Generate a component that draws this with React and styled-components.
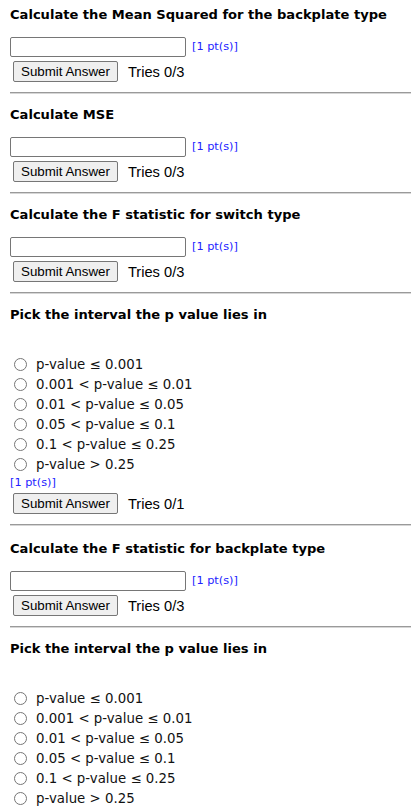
import styled, { createGlobalStyle } from "styled-components";

const GlobalStyle = createGlobalStyle`
  html, body {
    margin: 0;
    padding: 0;
    background: #fff;
  }
  body {
    font-family: "DejaVu Sans", Verdana, sans-serif;
    color: #000;
  }
`;

const Page = styled.div`
  padding: 7px 0 0 10px;
`;

const Problem = styled.section`
  display: flex;
  flex-direction: column;
  align-items: flex-start;
`;

const Title = styled.h3`
  margin: 0 0 ${(p) => (p.$choice ? "31px" : "14px")};
  font-size: 13.07px;
  line-height: 16px;
  font-weight: bold;
`;

const InputRow = styled.div`
  display: flex;
  align-items: center;
  gap: 6px;
`;

const AnswerInput = styled.input`
  box-sizing: border-box;
  width: 176px;
  height: 20px;
  margin: 0;
  border: 1px solid #767676;
  border-radius: 2px;
  padding: 1px 2px;
`;

const Points = styled.span`
  margin-top: ${(p) => (p.$choice ? "2px" : "0")};
  font-size: 11.3px;
  line-height: 14px;
  color: #2222ff;
`;

const SubmitRow = styled.div`
  display: flex;
  align-items: center;
  gap: 10px;
  margin: ${(p) => (p.$choice ? "3px" : "4px")} 0 0 3px;
`;

const SubmitButton = styled.button`
  box-sizing: border-box;
  height: 21px;
  padding: 0 7px;
  margin: 0;
  font-family: "Liberation Sans", Arial, sans-serif;
  font-size: 13.33px;
  color: #000;
  background: #efefef;
  border: 1px solid #767676;
  border-radius: 2px;
`;

const Tries = styled.span`
  font-family: "Liberation Sans", Arial, sans-serif;
  font-size: 14.67px;
`;

const Rule = styled.hr`
  align-self: stretch;
  margin: 10px 0 ${(p) => (p.$choice ? "15px" : "13px")};
  border: 0;
  border-top: 1px solid #9a9a9a;
  border-bottom: 1px solid #d6d6d6;
`;

const Options = styled.div`
  display: flex;
  flex-direction: column;
`;

const Option = styled.label`
  display: flex;
  align-items: center;
  gap: 9px;
  height: 20px;
  padding-left: 4px;
  font-size: 13.33px;
  color: #111;
`;

const Radio = styled.input`
  width: 13px;
  height: 13px;
  margin: 0;
`;

const intervals = [
  "p-value ≤ 0.001",
  "0.001 < p-value ≤ 0.01",
  "0.01 < p-value ≤ 0.05",
  "0.05 < p-value ≤ 0.1",
  "0.1 < p-value ≤ 0.25",
  "p-value > 0.25",
];

const problems = [
  { kind: "text", title: "Calculate the Mean Squared for the backplate type", tries: "0/3" },
  { kind: "text", title: "Calculate MSE", tries: "0/3" },
  { kind: "text", title: "Calculate the F statistic for switch type", tries: "0/3" },
  { kind: "choice", title: "Pick the interval the p value lies in", tries: "0/1" },
  { kind: "text", title: "Calculate the F statistic for backplate type", tries: "0/3" },
  { kind: "choice", title: "Pick the interval the p value lies in", tries: "0/1" },
];

const TextProblem = ({ title, tries }) => (
  <Problem>
    <Title>{title}</Title>
    <InputRow>
      <AnswerInput type="text" />
      <Points>[1 pt(s)]</Points>
    </InputRow>
    <SubmitRow>
      <SubmitButton>Submit Answer</SubmitButton>
      <Tries>Tries {tries}</Tries>
    </SubmitRow>
    <Rule />
  </Problem>
);

const ChoiceProblem = ({ title, tries, id }) => (
  <Problem>
    <Title $choice>{title}</Title>
    <Options>
      {intervals.map((text) => (
        <Option key={text}>
          <Radio type="radio" name={`q${id}`} />
          {text}
        </Option>
      ))}
    </Options>
    <Points $choice>[1 pt(s)]</Points>
    <SubmitRow $choice>
      <SubmitButton>Submit Answer</SubmitButton>
      <Tries>Tries {tries}</Tries>
    </SubmitRow>
    <Rule $choice />
  </Problem>
);

export default function App() {
  return (
    <>
      <GlobalStyle />
      <Page>
        {problems.map((p, i) =>
          p.kind === "text" ? (
            <TextProblem key={i} {...p} />
          ) : (
            <ChoiceProblem key={i} id={i} {...p} />
          )
        )}
      </Page>
    </>
  );
}
